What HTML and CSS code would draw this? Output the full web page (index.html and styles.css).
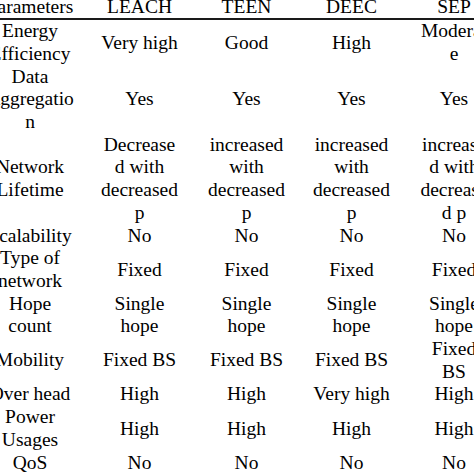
FILE: index.html
```html
<!DOCTYPE html>
<html>
<head>
<meta charset="utf-8">
<link rel="stylesheet" href="styles.css">
</head>
<body>
<div class="frame">
<table class="cmp">
<colgroup>
<col class="c-param"><col class="c-leach"><col class="c-teen"><col class="c-deec"><col class="c-sep">
</colgroup>
<thead>
<tr><th>Parameters</th><th>LEACH</th><th>TEEN</th><th>DEEC</th><th>SEP</th></tr>
</thead>
<tbody>
<tr><td>Energy<br>Efficiency</td><td>Very high</td><td>Good</td><td>High</td><td>Moderat<br>e</td></tr>
<tr><td>Data<br>Aggregatio<br>n</td><td>Yes</td><td>Yes</td><td>Yes</td><td>Yes</td></tr>
<tr><td>Network<br>Lifetime</td><td>Decrease<br>d with<br>decreased<br>p</td><td>increased<br>with<br>decreased<br>p</td><td>increased<br>with<br>decreased<br>p</td><td>increase<br>d with<br>decrease<br>d p</td></tr>
<tr><td>Scalability</td><td>No</td><td>No</td><td>No</td><td>No</td></tr>
<tr><td>Type of<br>network</td><td>Fixed</td><td>Fixed</td><td>Fixed</td><td>Fixed</td></tr>
<tr><td>Hope<br>count</td><td>Single<br>hope</td><td>Single<br>hope</td><td>Single<br>hope</td><td>Single<br>hope</td></tr>
<tr><td>Mobility</td><td>Fixed BS</td><td>Fixed BS</td><td>Fixed BS</td><td>Fixed<br>BS</td></tr>
<tr><td>Over head</td><td>High</td><td>High</td><td>Very high</td><td>High</td></tr>
<tr><td>Power<br>Usages</td><td>High</td><td>High</td><td>High</td><td>High</td></tr>
<tr><td>QoS</td><td>No</td><td>No</td><td>No</td><td>No</td></tr>
</tbody>
</table>
</div>
</body>
</html>
```
FILE: styles.css
```css
html, body {
  margin: 0;
  padding: 0;
  background: #fff;
}
.frame {
  width: 474px;
  height: 474px;
  overflow: hidden;
}
.cmp {
  border-collapse: separate;
  border-spacing: 0;
  table-layout: fixed;
  width: 530px;
  margin-top: -4.5px;
  margin-left: -25.5px;
  font-family: "Liberation Serif", "Times New Roman", serif;
  font-size: 19.5px;
  line-height: 22.7px;
  color: #000;
}
.c-param { width: 111px; }
.c-leach { width: 108px; }
.c-teen { width: 106px; }
.c-deec { width: 104px; }
.c-sep { width: 101px; }
.cmp th, .cmp td {
  padding: 0;
  text-align: center;
  vertical-align: middle;
  white-space: nowrap;
  font-weight: normal;
}
.cmp th {
  border-bottom: 2px solid #1a1a1a;
}
```
